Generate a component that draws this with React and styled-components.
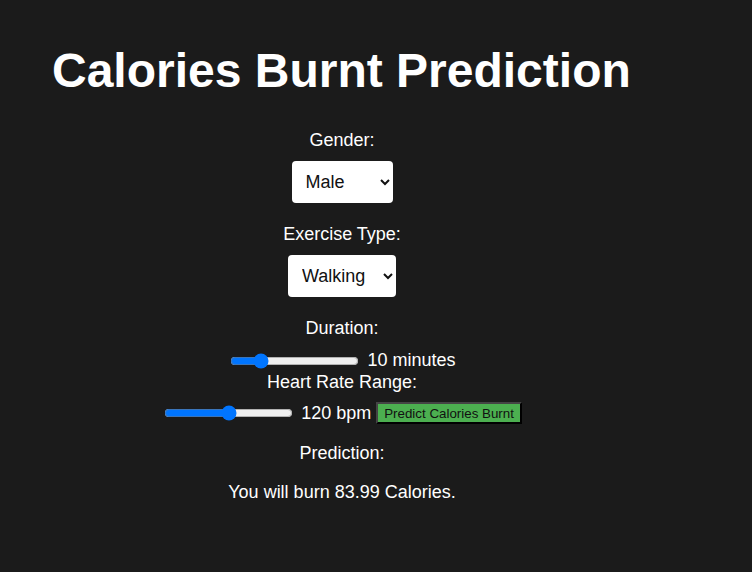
import React, { useState } from 'react';
import styled, { createGlobalStyle } from 'styled-components';

const GlobalStyle = createGlobalStyle`
  html, body {
    margin: 0;
    padding: 0;
    background: #1b1b1b;
    color: #ffffff;
    font-family: "Liberation Sans", Arial, sans-serif;
  }
`;

const Page = styled.div`
  width: 684px;
  min-height: 572px;
  padding-top: 43px;
  box-sizing: border-box;
`;

const Title = styled.h1`
  margin: 0 0 32px 0;
  padding-left: 52px;
  font-size: 48px;
  font-weight: bold;
  line-height: 1.15;
`;

const Form = styled.div`
  display: flex;
  flex-direction: column;
  align-items: center;
  font-size: 18px;
`;

const Group = styled.div`
  display: flex;
  flex-direction: column;
  align-items: center;
  margin-bottom: ${(p) => p.$gap || 0}px;
`;

const Label = styled.label`
  display: block;
  line-height: 21px;
  margin-bottom: ${(p) => p.$gap || 0}px;
`;

const Select = styled.select`
  font-family: "Liberation Sans", Arial, sans-serif;
  font-size: 18px;
  padding: 10px 10px;
  border: none;
  border-radius: 4px;
  background: #ffffff;
  color: #111111;
`;

const Row = styled.div`
  display: flex;
  align-items: center;
  gap: 6px;
  height: ${(p) => p.$h}px;
`;

const Range = styled.input`
  width: 129px;
  margin: 2px;
`;

const Value = styled.span`
  line-height: 21px;
`;

const Button = styled.button`
  font-family: "Liberation Sans", Arial, sans-serif;
  font-size: 13.33px;
  padding: 1px 6px;
  background: #4caf50;
  color: #111111;
  border: 2px outset #444444;
  height: 22px;
  margin-left: -1px;
`;

const Result = styled.p`
  margin: 18px 0 0 0;
  line-height: 21px;
`;

export default function App() {
  const [duration, setDuration] = useState(10);
  const [heart, setHeart] = useState(120);

  return (
    <Page>
      <GlobalStyle />
      <Title>Calories Burnt Prediction</Title>
      <Form>
        <Group $gap={21}>
          <Label $gap={10}>Gender:</Label>
          <Select defaultValue="male">
            <option value="male">Male</option>
            <option value="female">Female</option>
          </Select>
        </Group>
        <Group $gap={21}>
          <Label $gap={10}>Exercise Type:</Label>
          <Select defaultValue="walking">
            <option value="walking">Walking</option>
            <option value="running">Running</option>
            <option value="cycling">Cycling</option>
          </Select>
        </Group>
        <Group $gap={10}>
          <Label $gap={10}>Duration:</Label>
          <Row $h={23}>
            <Range
              type="range"
              min="0"
              max="50"
              value={duration}
              onChange={(e) => setDuration(e.target.value)}
            />
            <Value>{duration} minutes</Value>
          </Row>
          <Label $gap={0}>Heart Rate Range:</Label>
          <Row $h={40}>
            <Range
              type="range"
              min="60"
              max="180"
              value={heart}
              onChange={(e) => setHeart(e.target.value)}
            />
            <Value>{heart} bpm</Value>
            <Button>Predict Calories Burnt</Button>
          </Row>
        </Group>
        <Group>
          <Label>Prediction:</Label>
          <Result>You will burn 83.99 Calories.</Result>
        </Group>
      </Form>
    </Page>
  );
}
